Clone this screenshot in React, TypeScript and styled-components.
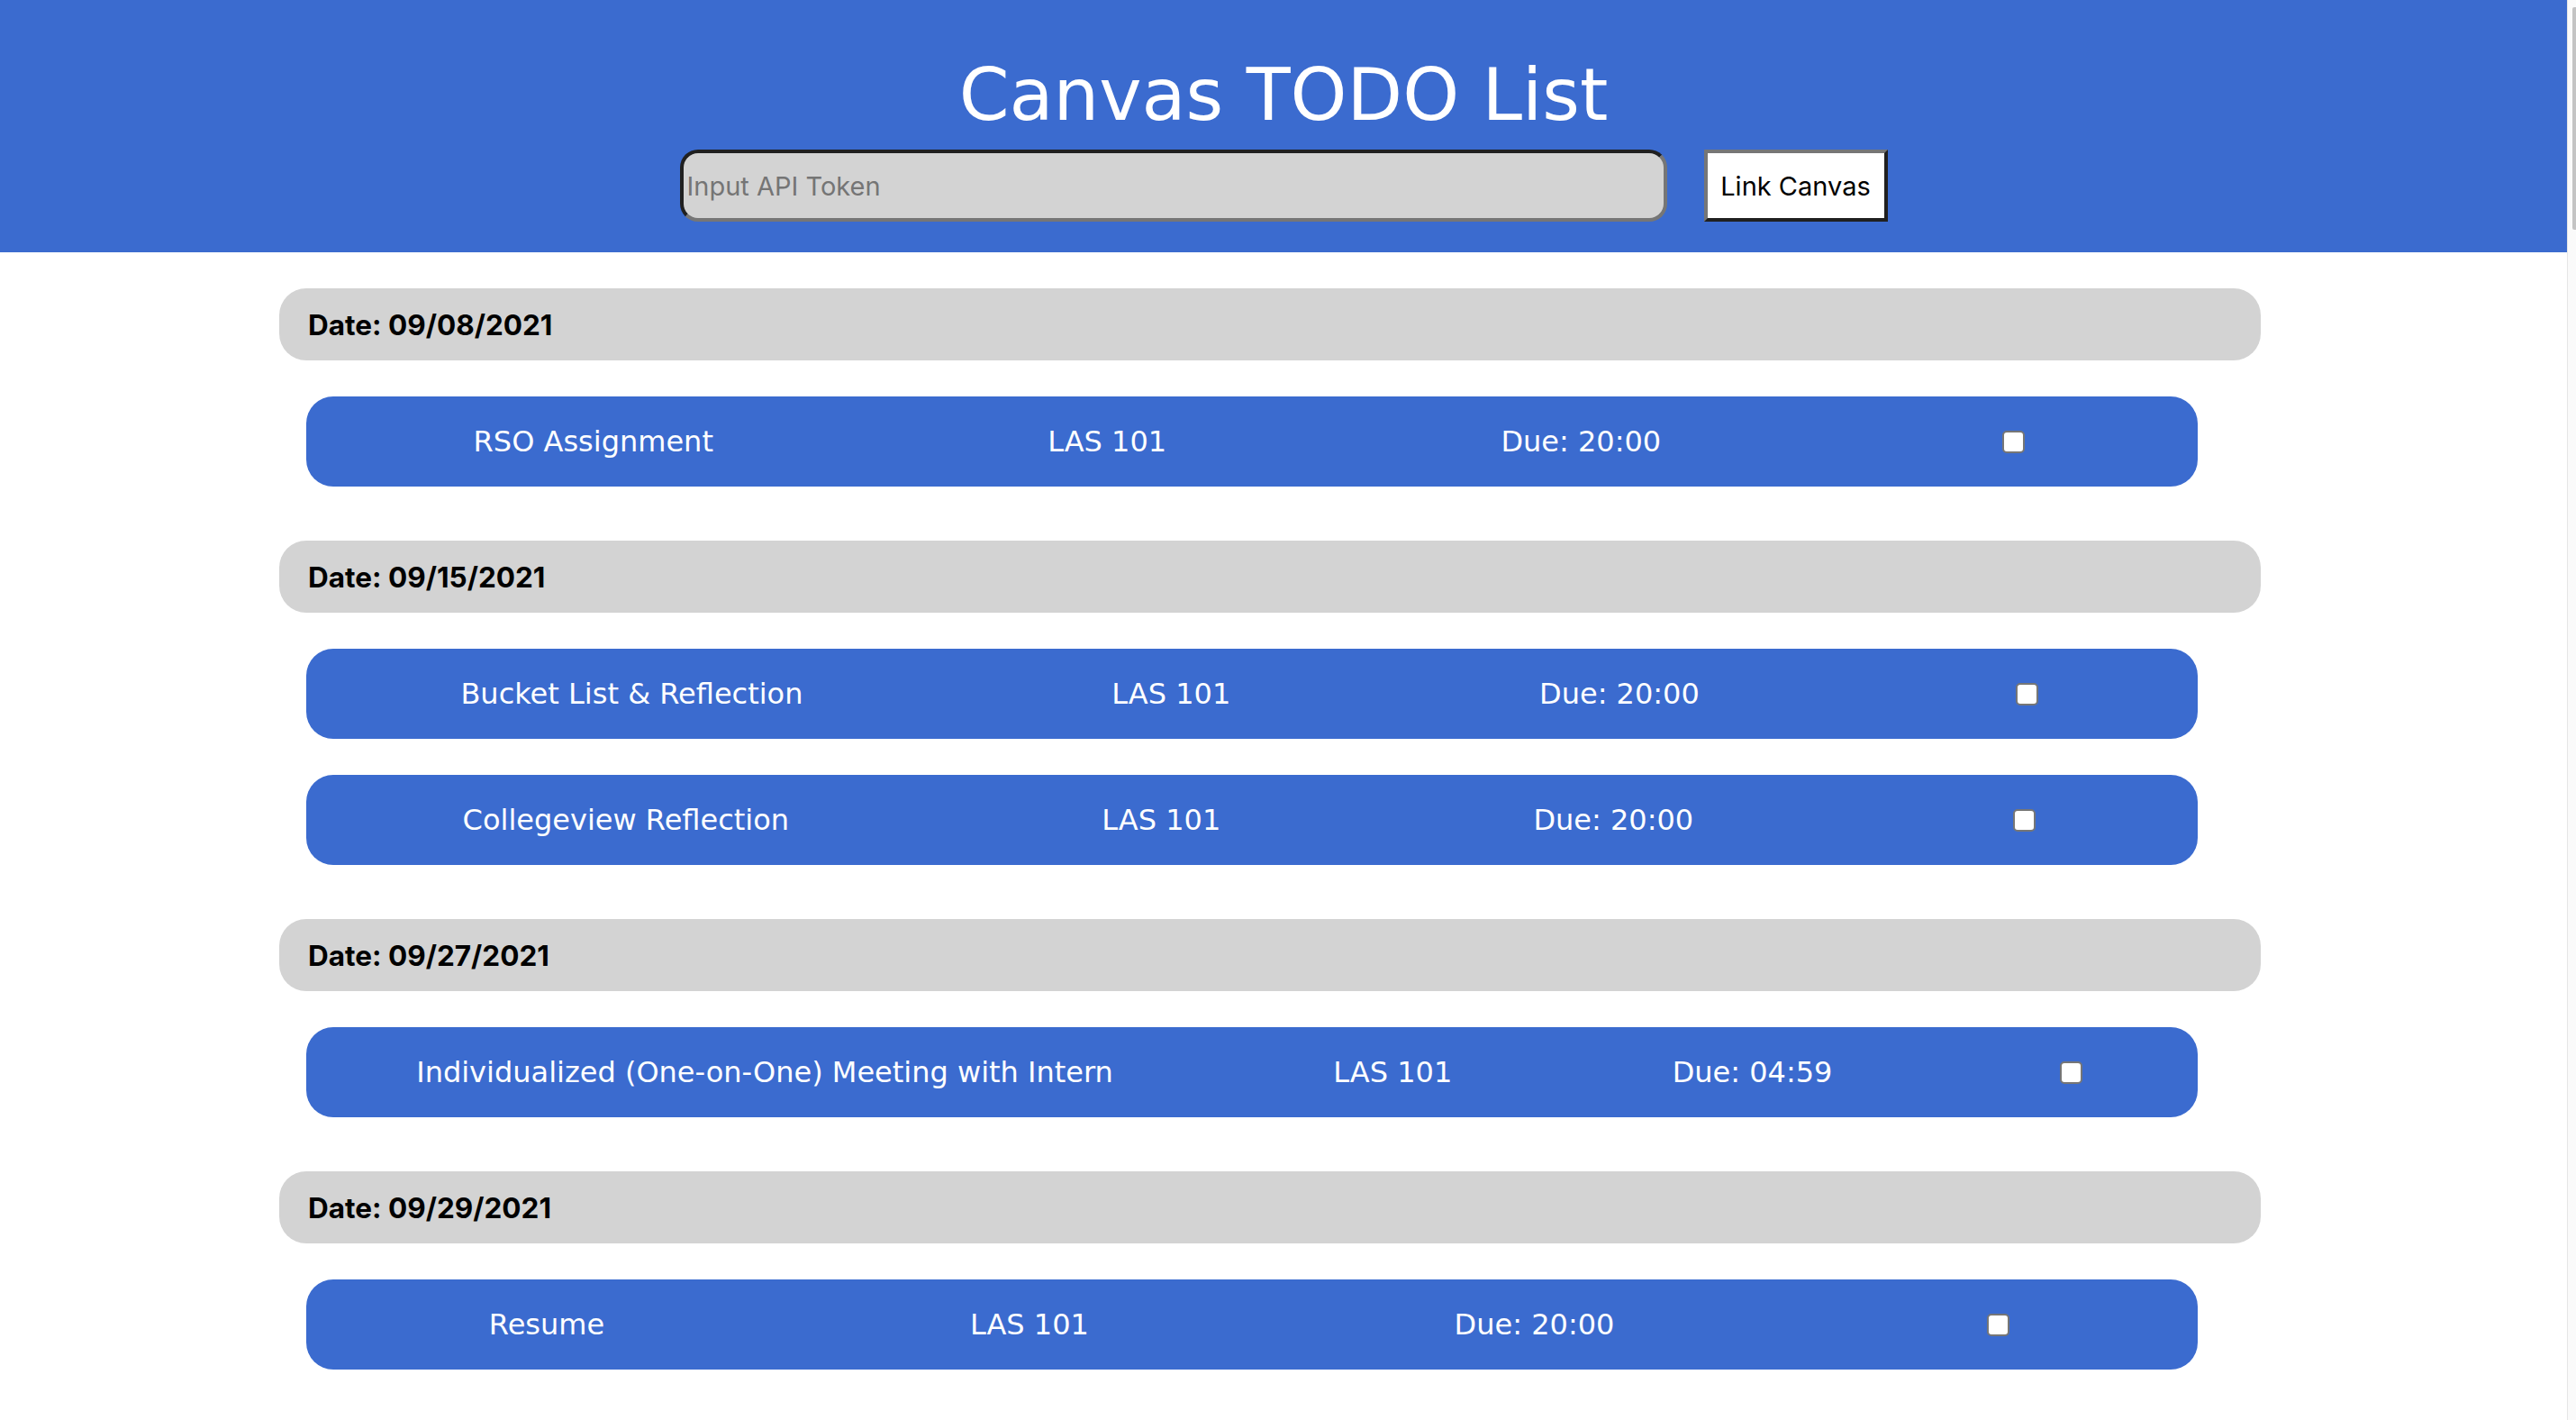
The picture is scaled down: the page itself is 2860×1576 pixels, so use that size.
import { useState } from 'react';

import styled, { createGlobalStyle } from 'styled-components';

const GlobalStyle = createGlobalStyle`
    html, body {
        margin: 0;
        padding: 0;
        background: #ffffff;
    }

    body {
        font-family: 'DejaVu Sans', Verdana, sans-serif;
    }
`;

const Page = styled.div`
    margin-right: 10px;
`;

// fake window scrollbar, the screenshot shows one on the right edge
const ScrollTrack = styled.div`
    position: fixed;
    top: 0;
    right: 0;
    bottom: 0;
    width: 10px;
    box-sizing: border-box;
    background-color: #fafafa;
    border-left: 1px solid #e6e6e6;
`;

const ScrollThumb = styled.div`
    position: absolute;
    top: 8px;
    right: 0;
    width: 4px;
    height: 247px;
    background-color: #c4c4c4;
    border-radius: 2px 0 0 2px;
`;

const Header = styled.header`
    background-color: #3b6bcf;
    padding: 59px 0 34px;
    display: flex;
    flex-direction: column;
    align-items: center;
`;

const Title = styled.h1`
    margin: 0;
    color: #ffffff;
    font-family: 'DejaVu Sans', Verdana, sans-serif;
    font-size: 80px;
    font-weight: 400;
    line-height: normal;
`;

const TokenForm = styled.div`
    display: flex;
    align-items: center;
    gap: 41px;
    margin-top: 14px;
`;

const TokenInput = styled.input`
    box-sizing: border-box;
    width: 1096px;
    height: 80px;
    padding: 0 4px;
    background-color: #d3d3d3;
    border: 4px solid;
    border-color: #202020 #767676 #767676 #202020;
    border-radius: 20px;
    font-family: Inter, 'Liberation Sans', sans-serif;
    font-size: 29px;
    color: #000000;
    outline: none;

    &::placeholder {
        color: #757575;
    }
`;

const LinkButton = styled.button`
    box-sizing: border-box;
    width: 204px;
    height: 80px;
    padding: 0 12px;
    background-color: #ffffff;
    border: 4px solid;
    border-color: #767676 #202020 #202020 #767676;
    font-family: Inter, 'Liberation Sans', sans-serif;
    font-size: 29px;
    color: #000000;
    cursor: pointer;
`;

const Main = styled.main`
    width: 2200px;
    padding: 40px 0 60px 310px;
    display: flex;
    flex-direction: column;
    gap: 60px;
`;

const DateGroup = styled.section`
    display: flex;
    flex-direction: column;
    gap: 40px;
`;

const DateBar = styled.div`
    box-sizing: border-box;
    height: 80px;
    padding: 0 32px;
    display: flex;
    align-items: center;
    background-color: #d3d3d3;
    border-radius: 30px;
    font-family: Inter, 'Liberation Sans', sans-serif;
    font-size: 31.5px;
    font-weight: 700;
    color: #000000;
`;

const TaskRow = styled.div`
    box-sizing: border-box;
    width: 2100px;
    height: 100px;
    margin-left: 30px;
    display: flex;
    align-items: center;
    justify-content: space-around;
    background-color: #3b6bcf;
    border-radius: 30px;
    color: #ffffff;
    font-family: 'DejaVu Sans', Verdana, sans-serif;
    font-size: 32px;
`;

const Cell = styled.span`
    white-space: nowrap;
`;

const DoneBox = styled.input`
    appearance: none;
    box-sizing: border-box;
    width: 25px;
    height: 25px;
    margin: 6px 6px 6px 8px;
    background-color: #ffffff;
    border: 2px solid #767676;
    border-radius: 5px;
    cursor: pointer;

    &:checked {
        background-color: #0075ff;
        border-color: #0075ff;
    }
`;

interface Task {
    name: string;
    course: string;
    due: string;
}

interface Group {
    date: string;
    tasks: Task[];
}

const groups: Group[] = [
    {
        date: '09/08/2021',
        tasks: [{ name: 'RSO Assignment', course: 'LAS 101', due: '20:00' }],
    },
    {
        date: '09/15/2021',
        tasks: [
            { name: 'Bucket List & Reflection', course: 'LAS 101', due: '20:00' },
            { name: 'Collegeview Reflection', course: 'LAS 101', due: '20:00' },
        ],
    },
    {
        date: '09/27/2021',
        tasks: [
            {
                name: 'Individualized (One-on-One) Meeting with Intern',
                course: 'LAS 101',
                due: '04:59',
            },
        ],
    },
    {
        date: '09/29/2021',
        tasks: [{ name: 'Resume', course: 'LAS 101', due: '20:00' }],
    },
];

function App() {
    const [token, setToken] = useState<string>('');

    return (
        <>
            <GlobalStyle />
            <Page>
                <Header>
                    <Title>Canvas TODO List</Title>
                    <TokenForm>
                        <TokenInput
                            placeholder="Input API Token"
                            value={token}
                            onChange={(e) => setToken(e.target.value)}
                        />
                        <LinkButton>Link Canvas</LinkButton>
                    </TokenForm>
                </Header>

                <Main>
                    {groups.map((group) => (
                        <DateGroup key={group.date}>
                            <DateBar>Date: {group.date}</DateBar>
                            {group.tasks.map((task) => (
                                <TaskRow key={task.name}>
                                    <Cell>{task.name}</Cell>
                                    <Cell>{task.course}</Cell>
                                    <Cell>Due: {task.due}</Cell>
                                    <DoneBox type="checkbox" />
                                </TaskRow>
                            ))}
                        </DateGroup>
                    ))}
                </Main>
            </Page>
            <ScrollTrack>
                <ScrollThumb />
            </ScrollTrack>
        </>
    );
}

export default App;
